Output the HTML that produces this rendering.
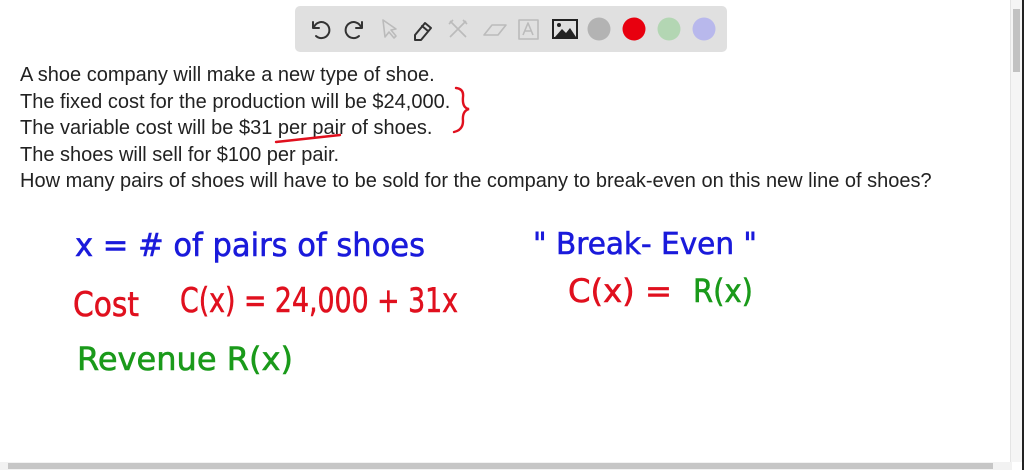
<!DOCTYPE html>
<html><head><meta charset="utf-8"><style>
html,body{margin:0;padding:0;width:1024px;height:470px;overflow:hidden;background:#fff;position:relative;font-family:"Liberation Sans",sans-serif}
.tb{position:absolute;left:295px;top:6px;width:432px;height:46px;background:#e0e0e0;border-radius:5px}
.txt{position:absolute;left:20px;top:62px;font-size:20px;line-height:26.5px;color:#222;white-space:nowrap}
.sb{position:absolute;right:0;top:0;width:13px;height:462px;background:#f5f5f5;border-left:1px solid #e4e4e4}
.sb .th{position:absolute;left:2px;top:9px;width:7px;height:63px;background:#c2c2c2}
.hb{position:absolute;left:0;bottom:0;width:1012px;height:8px;background:#f2f2f2}
.hb .th{position:absolute;left:8px;top:1px;width:985px;height:6px;background:#c6c6c6}
.edge{position:absolute;right:0;top:0;width:2px;height:470px;background:#222}
svg{position:absolute;left:0;top:0}
</style></head><body>
<div class="tb"></div>
<div class="txt">A shoe company will make a new type of shoe.<br>The fixed cost for the production will be $24,000.<br>The variable cost will be $31 per pair of shoes.<br>The shoes will sell for $100 per pair.<br>How many pairs of shoes will have to be sold for the company to break-even on this new line of shoes?</div>
<svg width="1024" height="470">
<g fill="none" stroke="#333" stroke-width="2" stroke-linecap="round" stroke-linejoin="round">
<path d="M313 22 v6 h6 M314 27 a8 8 0 1 1 2 9"/>
<path d="M362 22 v6 h-6 M361 27 a8 8 0 1 0 -2 9"/>
<path d="M415 35 l10-12 l6 5 l-10 12 h-6 z M422 26 l6 5"/>
</g>
<g fill="none" stroke="#bbb" stroke-width="1.6" stroke-linejoin="round">
<path d="M383 20 l2 17 l4-5 l5 6 l2-2 l-5-6 l5-1 z"/>
<path d="M450 21 l16 16 M466 21 l-16 16 M449 24 l4-4 M463 20 l4 4"/>
<path d="M484 35 l8-10 h14 l-8 10 z"/>
<rect x="519" y="20" width="19" height="19"/>
<path d="M523 35 l5-12 l5 12 M525 31 h6"/>
</g>
<rect x="553" y="20" width="24" height="18" fill="none" stroke="#222" stroke-width="2"/>
<circle cx="559" cy="25" r="2" fill="#222"/>
<path d="M555 37 l7-8 l4 4 l4-5 l6 9 z" fill="#222"/>
<circle cx="599" cy="29" r="11.5" fill="#b3b3b3"/>
<circle cx="634" cy="29" r="11.5" fill="#e8000f"/>
<circle cx="669" cy="29" r="11.5" fill="#b3d6b3"/>
<circle cx="704" cy="29" r="11.5" fill="#b8b8ec"/>
<path d="M456 88 q8 1 7 9 q-1 11 6 12 q-7 2 -6 12 q0 9 -9 11" fill="none" stroke="#e0101e" stroke-width="2.4" stroke-linecap="round"/>
<path d="M276 142 q28 -3 64 -7" fill="none" stroke="#e0101e" stroke-width="2.4" stroke-linecap="round"/>
<g font-family="'DejaVu Sans','Liberation Sans',sans-serif" stroke-width="0.6">
<text x="75" y="256" font-size="32" fill="#1a1adb" stroke="#1a1adb" textLength="350" lengthAdjust="spacingAndGlyphs">x = # of pairs of shoes</text>
<text x="73" y="316" font-size="34" fill="#e0101e" stroke="#e0101e" textLength="66" lengthAdjust="spacingAndGlyphs">Cost</text>
<text x="180" y="312" font-size="34" fill="#e0101e" stroke="#e0101e" textLength="278" lengthAdjust="spacingAndGlyphs">C(x) = 24,000 + 31x</text>
<text x="77" y="370" font-size="32" fill="#1a9a1a" stroke="#1a9a1a" textLength="216" lengthAdjust="spacingAndGlyphs">Revenue  R(x)</text>
<text x="533" y="254" font-size="30" fill="#1a1adb" stroke="#1a1adb" textLength="224" lengthAdjust="spacingAndGlyphs">" Break- Even "</text>
<text x="568" y="302" font-size="32" fill="#e0101e" stroke="#e0101e" textLength="104" lengthAdjust="spacingAndGlyphs">C(x) =</text>
<text x="693" y="302" font-size="32" fill="#1a9a1a" stroke="#1a9a1a" textLength="60" lengthAdjust="spacingAndGlyphs">R(x)</text>
</g>
</svg>
<div class="sb"><div class="th"></div></div>
<div class="hb"><div class="th"></div></div>
<div class="edge"></div>
</body></html>
